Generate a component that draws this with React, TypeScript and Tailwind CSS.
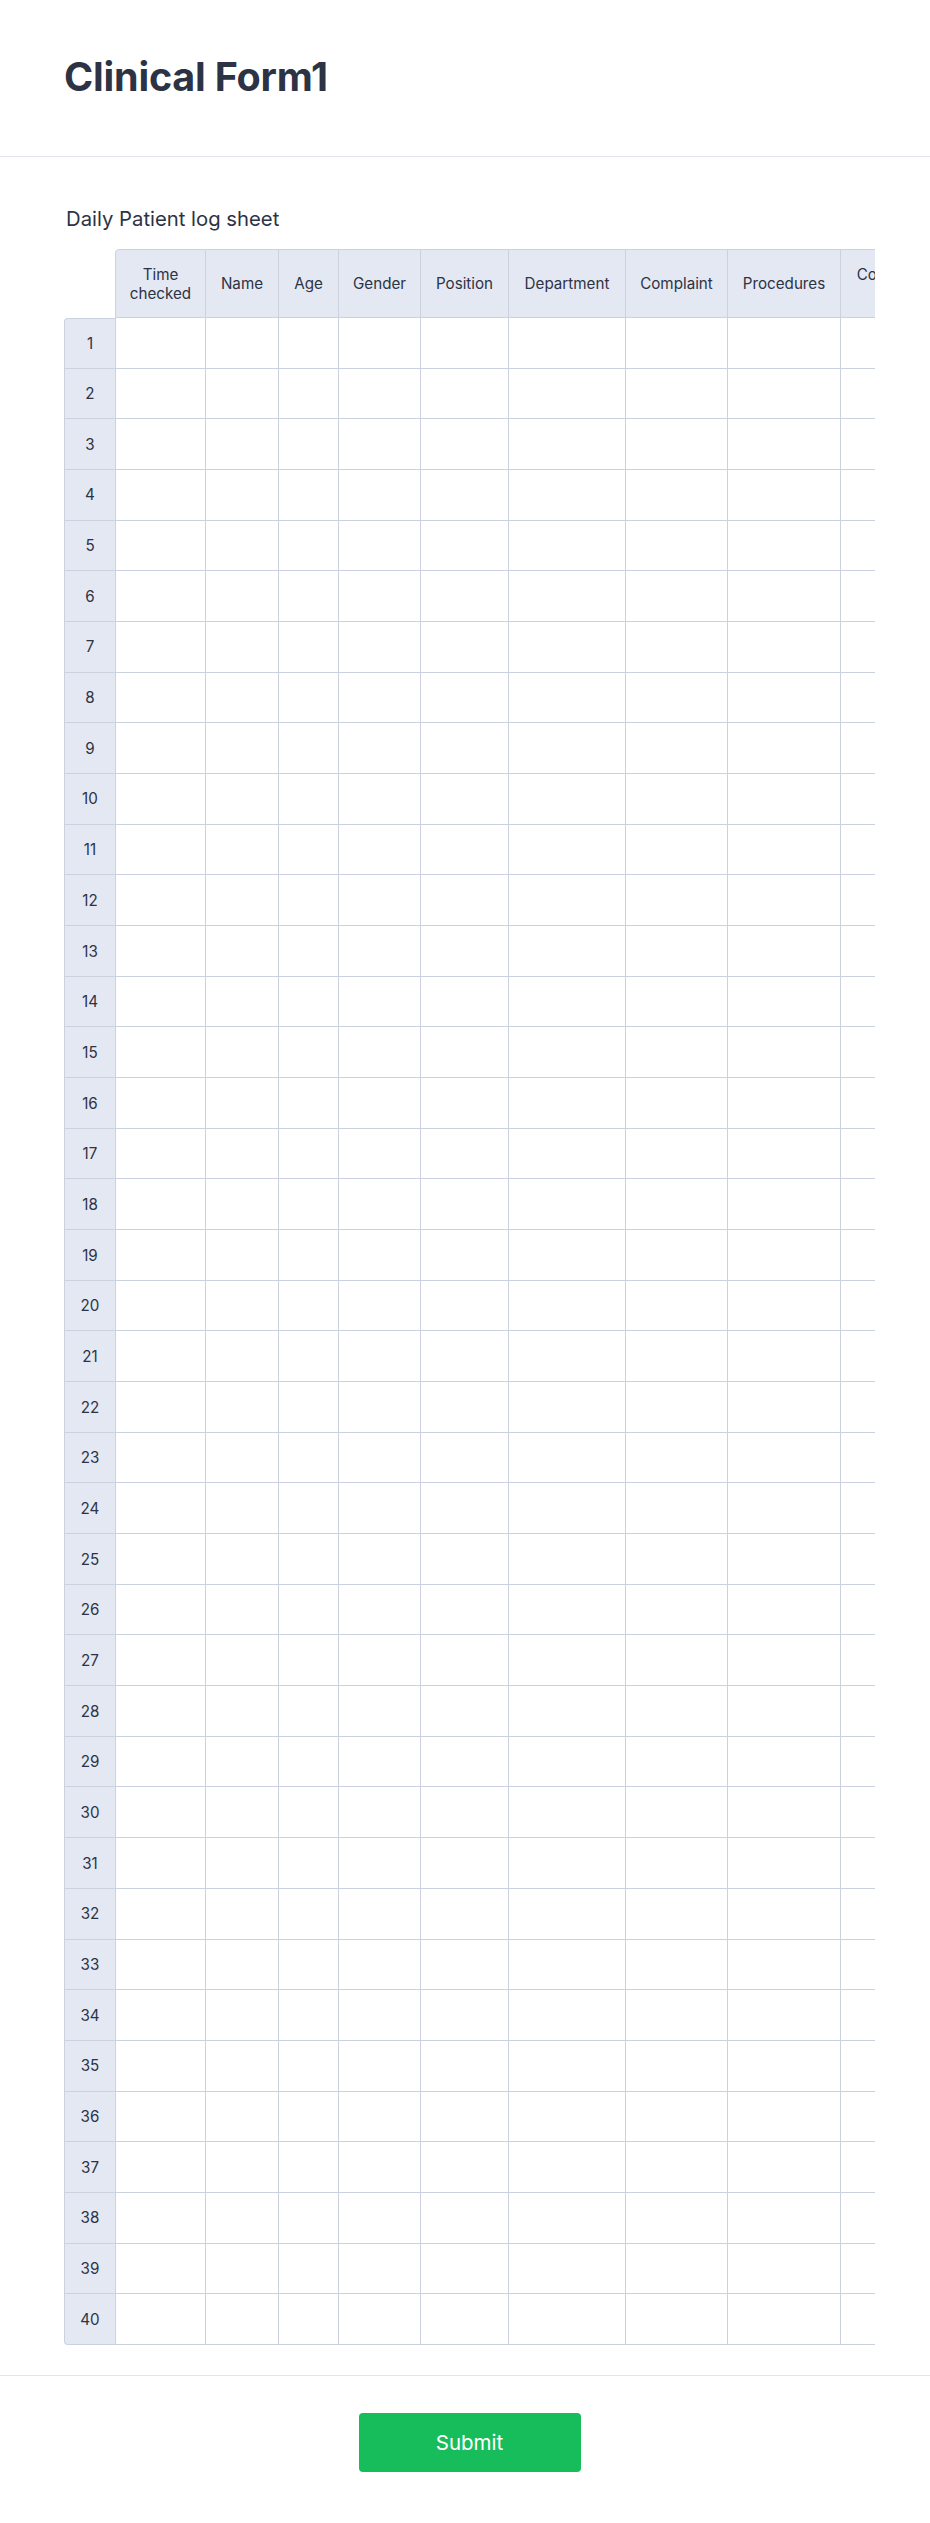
import React from "react";

const columns = [
  { label: "Time checked", w: "w-[91px] border-l" },
  { label: "Name", w: "w-[73px]" },
  { label: "Age", w: "w-[60px]" },
  { label: "Gender", w: "w-[82px]" },
  { label: "Position", w: "w-[88px]" },
  { label: "Department", w: "w-[117px]" },
  { label: "Complaint", w: "w-[102px]" },
  { label: "Procedures", w: "w-[113px]" },
  { label: "Comments made", w: "w-[110px]" },
];

const rows = Array.from({ length: 40 }, (_, i) => i + 1);

export default function App() {
  return (
    <div
      className="min-h-[2523px] w-full bg-white text-[#2c3345]"
      style={{ fontFamily: "Inter, 'Noto Sans', sans-serif" }}
    >
      {/* Form title */}
      <div className="h-[157px] border-b border-[#e3e5ec] pl-[64px] pt-[53px]">
        <h1 className="text-[39.5px] font-bold leading-[48px] tracking-[-0.2px]">Clinical Form1</h1>
      </div>

      {/* Input table */}
      <div className="pl-[64px] pr-[55px] pt-[50px] pb-[30px]">
        <p className="text-[20.3px] leading-[24px] pl-[2px]">Daily Patient log sheet</p>

        <div className="mt-[18px] overflow-hidden">
          <div className="w-max">
            {/* header */}
            <div className="flex">
              <div className="w-[51px] shrink-0" />
              {columns.map((col, i) => (
                <div
                  key={col.label}
                  className={`${col.w} shrink-0 h-[69px] flex items-center justify-center text-center bg-[#e4e8f3] border-t border-r border-b border-[#cbd1de] px-2 pt-[2px] text-[15.2px] leading-[18.7px] ${i === 0 ? "rounded-tl-[4px]" : ""} ${i === columns.length - 1 ? "items-start pt-[16px]" : ""}`}
                >
                  {col.label}
                </div>
              ))}
            </div>

            {/* body */}
            {rows.map((n) => (
              <div key={n} className="flex h-[50.675px]">
                <div
                  className={`w-[51px] shrink-0 flex items-center justify-center pt-[2px] bg-[#e4e8f3] border-l border-b border-[#cbd1de] text-[15.2px] ${n === 1 ? "border-t rounded-tl-[4px]" : ""} ${n === 40 ? "rounded-bl-[4px]" : ""}`}
                >
                  {n}
                </div>
                {columns.map((col) => (
                  <div key={col.label} className={`${col.w} shrink-0 bg-white border-r border-b border-[#cbd1de]`} />
                ))}
              </div>
            ))}
          </div>
        </div>
      </div>

      {/* Submit */}
      <div className="border-t border-[#e3e5ec] pl-[64px] pr-[55px] pt-[37px] pb-[50px] flex justify-center">
        <button className="w-[222px] h-[59px] pt-[2px] rounded-[4px] bg-[#18bd5b] text-white text-[20.5px] leading-none">
          Submit
        </button>
      </div>
    </div>
  );
}
